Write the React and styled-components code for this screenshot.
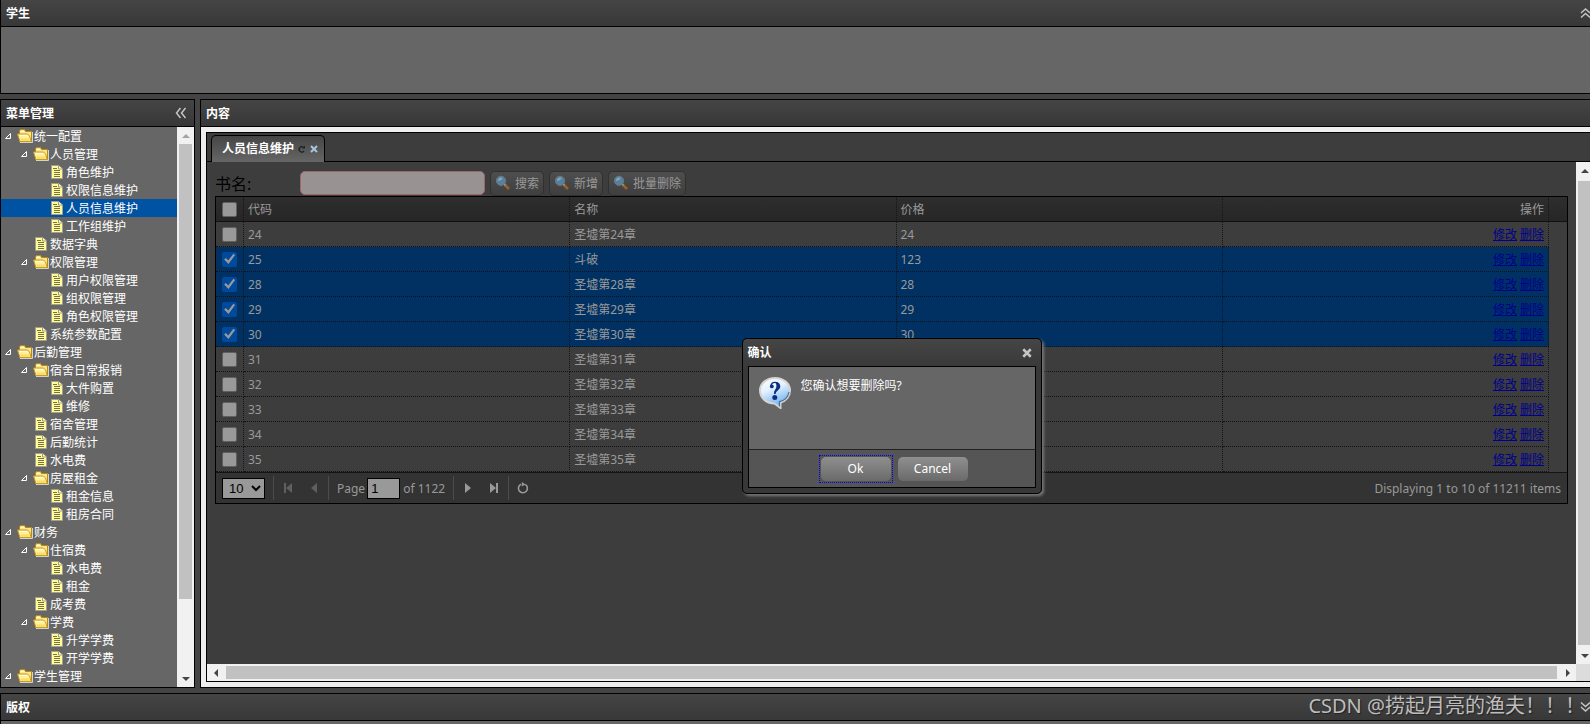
import React, { useState } from 'react'
import styled, { createGlobalStyle, css } from 'styled-components'

const GlobalStyle = createGlobalStyle`
  * {
    box-sizing: border-box;
  }
  html, body, #root {
    height: 100%;
    margin: 0;
  }
  body {
    overflow: hidden;
    background: #444;
    color: #fff;
    font-family: "Noto Sans", "Noto Sans CJK SC", sans-serif;
    font-size: 12px;
    line-height: 18px;
  }
  button, input, select {
    font: inherit;
    margin: 0;
  }
`

const TREE = [
  [0, 'folder', '统一配置'],
  [1, 'folder', '人员管理'],
  [2, 'file', '角色维护'],
  [2, 'file', '权限信息维护'],
  [2, 'file', '人员信息维护'],
  [2, 'file', '工作组维护'],
  [1, 'file', '数据字典'],
  [1, 'folder', '权限管理'],
  [2, 'file', '用户权限管理'],
  [2, 'file', '组权限管理'],
  [2, 'file', '角色权限管理'],
  [1, 'file', '系统参数配置'],
  [0, 'folder', '后勤管理'],
  [1, 'folder', '宿舍日常报销'],
  [2, 'file', '大件购置'],
  [2, 'file', '维修'],
  [1, 'file', '宿舍管理'],
  [1, 'file', '后勤统计'],
  [1, 'file', '水电费'],
  [1, 'folder', '房屋租金'],
  [2, 'file', '租金信息'],
  [2, 'file', '租房合同'],
  [0, 'folder', '财务'],
  [1, 'folder', '住宿费'],
  [2, 'file', '水电费'],
  [2, 'file', '租金'],
  [1, 'file', '成考费'],
  [1, 'folder', '学费'],
  [2, 'file', '升学学费'],
  [2, 'file', '开学学费'],
  [0, 'folder', '学生管理'],
]

const ROWS = [
  { id: 24, name: '圣墟第24章', price: 24 },
  { id: 25, name: '斗破', price: 123 },
  { id: 28, name: '圣墟第28章', price: 28 },
  { id: 29, name: '圣墟第29章', price: 29 },
  { id: 30, name: '圣墟第30章', price: 30 },
  { id: 31, name: '圣墟第31章', price: 31 },
  { id: 32, name: '圣墟第32章', price: 32 },
  { id: 33, name: '圣墟第33章', price: 33 },
  { id: 34, name: '圣墟第34章', price: 34 },
  { id: 35, name: '圣墟第35章', price: 35 },
]

/* ---------- layout ---------- */

// the layout is a little wider than the window, its right edge is cut off
const Layout = styled.div`
  display: flex;
  flex-direction: column;
  gap: 5px;
  width: calc(100% + 10px);
  height: 100%;
  background: #444;
`
const Middle = styled.div`
  display: flex;
  flex: 1;
  gap: 5px;
  min-height: 0;
`
const Panel = styled.section`
  display: flex;
  flex-direction: column;
  border: 1px solid #000;
  min-width: 0;
`
const North = styled(Panel)`
  height: 94px;
  border-top: 0;
`
const West = styled(Panel)`
  flex: 0 0 195px;
`
const Center = styled(Panel)`
  flex: 1;
`
const South = styled(Panel)`
  height: 31px;
  border-bottom: 0;
`
const PanelHeader = styled.header`
  display: flex;
  align-items: center;
  justify-content: space-between;
  flex: 0 0 27px;
  padding: 0 5px;
  border-bottom: 1px solid #000;
  background: linear-gradient(#454545, #383838);
`
const PanelTitle = styled.h2`
  margin: 0;
  padding-top: 2px;
  font-size: 12px;
  font-weight: 700;
`
const ToolButton = styled.button`
  display: grid;
  place-items: center;
  width: 16px;
  height: 16px;
  padding: 0;
  border: 0;
  background: none;
  color: #c4c4c4;
`
const PanelBody = styled.div`
  flex: 1;
  background: #666;
`

/* ---------- scroll bars ---------- */

const Bar = styled.div`
  display: flex;
  flex-direction: ${p => (p.$vertical ? 'column' : 'row')};
  gap: ${p => p.$gap}px;
  background: #f1f1f1;
  ${p => (p.$vertical ? 'width: 17px;' : 'height: 17px;')}
`
const BarArrow = styled.span`
  display: grid;
  place-items: center;
  flex: 0 0 17px;
  color: ${p => (p.$off ? '#a3a3a3' : '#444')};
`
const BarThumb = styled.span`
  flex: ${p => p.$share};
  margin: ${p => (p.$vertical ? '0 2px' : '2px 0')};
  background: #c1c1c1;
`
const BarRest = styled.span`
  flex: ${p => p.$share};
`

const TRIANGLES = {
  up: 'M0 6 L4 2 L8 6Z',
  down: 'M0 2 L4 6 L8 2Z',
  left: 'M6 0 L2 4 L6 8Z',
  right: 'M2 0 L6 4 L2 8Z',
}
const Triangle = ({ dir }) => (
  <svg width="8" height="8" viewBox="0 0 8 8"><path d={TRIANGLES[dir]} fill="currentColor" /></svg>
)

const ScrollBar = ({ vertical, gap = 0, thumb, atStart }) => (
  <Bar $vertical={vertical} $gap={gap} aria-hidden="true">
    <BarArrow $off={atStart}><Triangle dir={vertical ? 'up' : 'left'} /></BarArrow>
    <BarThumb $vertical={vertical} $share={thumb} />
    {thumb < 100 && <BarRest $share={100 - thumb} />}
    <BarArrow><Triangle dir={vertical ? 'down' : 'right'} /></BarArrow>
  </Bar>
)

/* ---------- icons ---------- */

const CHEVRONS = {
  up: 'M1 6 L5.5 2 L10 6 M1 10.5 L5.5 6.5 L10 10.5',
  down: 'M1 1.5 L5.5 5.5 L10 1.5 M1 6 L5.5 10 L10 6',
  left: 'M5.5 1 L1.5 6 L5.5 11 M10.5 1 L6.5 6 L10.5 11',
}
const DoubleChevron = ({ dir }) => (
  <svg width="12" height="12" viewBox="0 0 12 12">
    <path d={CHEVRONS[dir]} fill="none" stroke="currentColor" strokeWidth="1.5" />
  </svg>
)

const ExpandedIcon = () => (
  <svg width="16" height="18" viewBox="0 0 16 18">
    <path d="M4.5 11.5 L9.5 11.5 L9.5 6.5Z" fill="none" stroke="#fff" />
  </svg>
)

const FolderIcon = () => (
  <svg width="16" height="16" viewBox="0 0 16 16">
    <path d="M3 14.5 H15.5 V4" fill="none" stroke="#d8d4c4" />
    <path d="M2.5 13.5 V3 L3.5 1.5 H7.5 L8.5 3.5 H14.5 V13.5Z" fill="#fbe689" stroke="#b98a1a" />
    <path d="M3.5 3.5 H7.5" stroke="#fffbd0" />
    <path d="M0.5 6 H10.5 L12.5 8 L14.2 13.5 H3Z" fill="#fff099" stroke="#c79a2a" />
    <path d="M2 7.5 H10 L11.5 9" fill="none" stroke="#fffcd8" />
    <path d="M3.4 10.5 H12 L12.8 12.7 H4Z" fill="#f9dc62" />
  </svg>
)

const FileIcon = () => (
  <svg width="16" height="16" viewBox="0 0 16 16">
    <path d="M2.5 1.5 H9.5 L13.5 5 V14.5 H2.5Z" fill="#fffb9e" stroke="#a3a08a" />
    <path d="M9.5 1.5 V5 H13.5" fill="#fffde0" stroke="#a09d70" />
    <path d="M4 4.5 H8 M5 6.5 H11 M5 8.5 H11 M5 10.5 H11 M5 12.5 H11" stroke="#77753c" />
  </svg>
)

const SearchIcon = () => (
  <svg width="16" height="16" viewBox="0 0 16 16">
    <path d="M9.5 9.5 L14 14" stroke="#9a6420" strokeWidth="2.5" />
    <path d="M9 8.8 L10.5 10.3" stroke="#8f8f8f" strokeWidth="2" />
    <circle cx="6" cy="5.8" r="4.6" fill="#56809f" stroke="#6f7880" />
    <path d="M3 6 A3.2 3.2 0 0 1 7.5 2.8 Q7 5.5 3 6Z" fill="#86a6bd" />
  </svg>
)

const QuestionIcon = () => (
  <svg width="32" height="32" viewBox="0 0 32 32" aria-hidden="true">
    <defs>
      <linearGradient id="bubble" x1="0" y1="0" x2="0.4" y2="1">
        <stop offset="0" stopColor="#fff" />
        <stop offset="0.45" stopColor="#e3f1ff" />
        <stop offset="1" stopColor="#6fb1ee" />
      </linearGradient>
    </defs>
    <path
      d="M16 1 C24.5 1 31 6.5 31 13.5 C31 19.5 27 24 21.5 25.5 L21.5 31 L15.5 26.5 C7 26 1 21 1 13.5 C1 6.5 7.5 1 16 1Z"
      fill="url(#bubble)"
      stroke="#d4d4d4"
      strokeWidth="2"
    />
    <path d="M30 15 C29 20 26 23.5 20.5 24.7 L20.5 29.5" fill="none" stroke="#4c6f96" strokeWidth="1.2" />
    <path d="M12 9 C12.2 6.4 13.8 5.4 16 5.4 C18 5.4 19.2 6.8 19.2 9 C19.2 12.4 15.8 12.6 15.6 17" fill="none" stroke="#0b2f86" strokeWidth="1.4" />
    <path d="M16.5 5 C19.8 5 21.3 7 21.3 9.3 C21.3 12.8 17.2 13.6 16.4 17 H15.2 C15 13 17.4 12.4 17.4 9 C17.4 7.2 17 6 15.8 5.8Z" fill="#0b2f86" />
    <circle cx="12.8" cy="9.4" r="1.9" fill="#0b2f86" />
    <circle cx="15.8" cy="20.4" r="2.5" fill="#0b2f86" />
  </svg>
)

const ReloadIcon = ({ size }) => (
  <svg width={size} height={size} viewBox="0 0 12 12">
    <path d="M8.2 2.4 A4.5 4.5 0 1 1 4 2.2" fill="none" stroke="currentColor" strokeWidth="1.6" />
    <path d="M4.8 0 L8.6 2.4 L4.8 4.4Z" fill="currentColor" />
  </svg>
)

const TabReloadIcon = () => (
  <svg width="8" height="8" viewBox="0 0 8 8">
    <path d="M6 6 A2.7 2.7 0 1 1 5.3 2" fill="none" stroke="currentColor" strokeWidth="1.4" />
    <path d="M7 0.5 V3.5 H4Z" fill="currentColor" />
  </svg>
)

const CrossIcon = ({ size }) => (
  <svg width={size} height={size} viewBox="0 0 8 8">
    <path d="M1 1 L7 7 M7 1 L1 7" fill="none" stroke="currentColor" strokeWidth="2" />
  </svg>
)

const PAGE_ARROWS = {
  first: 'M2 1 H4 V11 H2Z M10 1 V11 L4 6Z',
  prev: 'M9 1 V11 L3 6Z',
  next: 'M3 1 V11 L9 6Z',
  last: 'M2 1 V11 L8 6Z M8 1 H10 V11 H8Z',
}
const PageArrow = ({ to }) => (
  <svg width="12" height="12" viewBox="0 0 12 12"><path d={PAGE_ARROWS[to]} fill="currentColor" /></svg>
)

/* ---------- tree ---------- */

const TreeBody = styled.div`
  display: flex;
  flex: 1;
  min-height: 0;
  background: #666;
`
const Tree = styled.ul`
  flex: 1;
  min-width: 0;
  margin: 0;
  padding: 0;
  overflow: hidden;
  list-style: none;
`
const TreeNode = styled.li`
  display: flex;
  align-items: center;
  height: 18px;
  padding-left: ${p => p.$depth * 16 + (p.$leaf ? 16 : 0)}px;
  white-space: nowrap;
  cursor: pointer;
  ${p => p.$selected && css`
    background: #0052a3;
  `}
`
const TreeTitle = styled.span`
  padding: 2px 1px 0;
`

/* ---------- tabs ---------- */

const CenterBody = styled.div`
  display: flex;
  flex: 1;
  min-height: 0;
  padding: 5px;
  background: #eee;
`
const Tabs = styled.div`
  display: flex;
  flex-direction: column;
  flex: 1;
  min-width: 0;
  border: 1px solid #000;
  background: #3d3d3d;
`
const TabStrip = styled.div`
  display: flex;
  align-items: flex-end;
  flex: 0 0 29px;
  padding-left: 4px;
  border-bottom: 1px solid #000;
`
const Tab = styled.div`
  display: flex;
  align-items: center;
  gap: 4px;
  height: 27px;
  margin-bottom: -1px;
  padding: 0 6px 0 10px;
  border: 1px solid #000;
  border-bottom: 0;
  border-radius: 5px 5px 0 0;
  background: linear-gradient(#454545, #666);
  font-weight: 700;
`
const TabTool = styled.button`
  display: grid;
  place-items: center;
  width: 8px;
  height: 8px;
  padding: 0;
  border: 0;
  background: none;
  color: ${p => p.$color};
`
const Frame = styled.div`
  display: grid;
  grid-template: minmax(0, 1fr) 17px / minmax(0, 1fr) 17px;
  flex: 1;
  min-height: 0;
`
const Page = styled.div`
  position: relative;
  padding: 8px;
  color: #999;
`
const Corner = styled.span`
  background: #dcdcdc;
`

/* ---------- search bar ---------- */

const SearchForm = styled.form`
  display: flex;
  align-items: center;
  gap: 5px;
  height: 26px;
`
const SearchLabel = styled.label`
  width: 80px;
  padding-top: 2px;
  color: #000;
  font-size: 16px;
`
const SearchInput = styled.input`
  width: 185px;
  height: 24px;
  padding: 0 4px;
  border: 1px solid #a06666;
  border-radius: 5px;
  background: #999292;
`
const LinkButton = styled.button`
  display: flex;
  align-items: center;
  gap: 4px;
  height: 25px;
  padding: 0 4px;
  border: 1px solid #303030;
  border-radius: 5px;
  background: linear-gradient(#4e4e4e, #3f3f3f);
  color: #999;
`
const LinkButtonText = styled.span`
  padding-top: 2px;
`

/* ---------- data grid ---------- */

const Grid = styled.div`
  border: 1px solid #000;
`
const GridTable = styled.table`
  width: 100%;
  border-spacing: 0;
  table-layout: fixed;
`
const CheckCol = styled.col`
  width: 28px;
`
const GutterCol = styled.col`
  width: 18px;
`
const HeadRow = styled.tr`
  height: 25px;
  background: linear-gradient(#2e2e2e, #262626);
`
const cell = css`
  height: 25px;
  padding: ${p => (p.$check ? '0 4px' : '2px 4px 0')};
  border-right: 1px dotted #141414;
  font-weight: 400;
  text-align: ${p => p.$align || 'left'};
  white-space: nowrap;
`
const HeadCell = styled.th`
  ${cell}
  border-bottom: 1px solid #111;
`
const HeadGutter = styled.td`
  border-bottom: 1px solid #111;
`
const BodyCell = styled.td`
  ${cell}
  border-bottom: 1px dotted #111;
  background: ${p => (p.$selected ? '#003162' : 'transparent')};
`
const Check = styled.input.attrs({ type: 'checkbox' })`
  appearance: none;
  display: block;
  width: 15px;
  height: 15px;
  margin: 0 auto;
  border: 1px solid #606060;
  border-radius: 2px;
  background: #999;

  &:checked {
    border-color: #004a9e;
    background: #004a9e;
  }
  &:checked::before {
    content: '';
    display: block;
    width: 13px;
    height: 13px;
    background: #999;
    clip-path: polygon(9% 53%, 22% 42%, 40% 62%, 80% 10%, 93% 20%, 42% 88%);
  }
`
const RowLink = styled.a`
  margin-left: 3px;
  color: #00008f;
`

const Pager = styled.div`
  display: flex;
  align-items: center;
  height: 31px;
  padding: 0 6px;
  border-top: 1px solid #141414;
  background: #333;
`
const PageSize = styled.select`
  width: 43px;
  height: 21px;
  padding: 0 0 0 2px;
  border: 1px solid #000;
  border-radius: 0;
  background: #999;
  color: #000;
  font-family: "Liberation Sans", sans-serif;
  font-size: 13px;
`
const PagerLine = styled.span`
  width: 1px;
  height: 24px;
  margin: 0 2px;
  background: #4c4c4c;

  ${PageSize} + & {
    margin-left: 8px;
  }
`
const PagerButton = styled.button`
  display: grid;
  place-items: center;
  width: 24px;
  height: 24px;
  padding: 0;
  border: 0;
  background: none;
  color: ${p => (p.disabled ? '#5f5f5f' : '#999')};

  & + & {
    margin-left: 2px;
  }
`
const PageLabel = styled.label`
  padding: 2px 0 0 6px;
`
const PageTotal = styled.span`
  padding: 2px 6px 0 0;
`
const PageInput = styled.input`
  width: 33px;
  height: 21px;
  margin: 0 3px 0 2px;
  padding: 0 3px;
  border: 1px solid #000;
  background: #999;
  color: #000;
  font-family: "Liberation Sans", sans-serif;
  font-size: 13px;
`
const PagerInfo = styled.span`
  margin-left: auto;
  padding-top: 2px;
`

/* ---------- confirm window ---------- */

const Confirm = styled.div`
  position: absolute;
  top: calc(50% - 75px);
  left: calc(50% - 150px);
  width: 300px;
  padding: 0 5px 5px;
  border: 1px solid #000;
  border-radius: 5px;
  background: linear-gradient(#454545, #383838 20%);
  box-shadow: 2px 2px 3px #787878;
  color: #fff;
`
const ConfirmHeader = styled.header`
  display: flex;
  align-items: center;
  justify-content: space-between;
  height: 27px;
  padding-right: 1px;
`
const ConfirmTitle = styled(PanelTitle)`
  padding-top: 0;
`
const ConfirmBox = styled.div`
  border: 1px solid #000;
`
const Message = styled.div`
  display: flex;
  align-items: flex-start;
  gap: 10px;
  height: 82px;
  padding: 10px;
  background: #666;
`
const MessageText = styled.p`
  margin: 0;
`
const Buttons = styled.div`
  display: flex;
  align-items: center;
  justify-content: center;
  gap: 5px;
  height: 38px;
  padding-left: 5px;
  border-top: 1px solid #222;
  background: #555;
`
const ConfirmButton = styled.button`
  width: 72px;
  height: 26px;
  padding: 1px;
  border: 0;
  background: none;
  color: #fff;
  ${p => p.$active && css`
    outline: 1px dotted #00f;
  `}
`
const ConfirmFace = styled.span`
  display: block;
  border-radius: 5px;
  background: linear-gradient(#8f8f8f, #6a6a6a);
  line-height: 24px;
`

const Watermark = styled.span`
  position: absolute;
  right: 5px;
  bottom: 6px;
  color: #bdbdbd;
  font-size: 20px;
  line-height: 24px;
  text-shadow: 1px 1px 1px #222;
  pointer-events: none;
`

const SideMenu = () => {
  const [current, setCurrent] = useState(4)
  return (
    <TreeBody>
      <Tree>
        {TREE.map(([depth, kind, text], i) => (
          <TreeNode
            key={i}
            $depth={depth}
            $leaf={kind === 'file'}
            $selected={i === current}
            onClick={() => setCurrent(i)}
          >
            {kind === 'folder' && <ExpandedIcon />}
            {kind === 'folder' ? <FolderIcon /> : <FileIcon />}
            <TreeTitle>{text}</TreeTitle>
          </TreeNode>
        ))}
      </Tree>
      <ScrollBar vertical thumb={86.5} atStart />
    </TreeBody>
  )
}

const DataGrid = () => {
  const [checked, setChecked] = useState([25, 28, 29, 30])
  const toggle = id =>
    setChecked(checked.includes(id) ? checked.filter(c => c !== id) : [...checked, id])
  const all = checked.length === ROWS.length

  return (
    <Grid>
      <GridTable>
        <colgroup>
          <CheckCol />
          <col />
          <col />
          <col />
          <col />
          <GutterCol />
        </colgroup>
        <thead>
          <HeadRow>
            <HeadCell $check>
              <Check
                aria-label="全选"
                checked={all}
                onChange={() => setChecked(all ? [] : ROWS.map(r => r.id))}
              />
            </HeadCell>
            <HeadCell>代码</HeadCell>
            <HeadCell>名称</HeadCell>
            <HeadCell>价格</HeadCell>
            <HeadCell $align="right">操作</HeadCell>
            <HeadGutter />
          </HeadRow>
        </thead>
        <tbody>
          {ROWS.map(row => {
            const on = checked.includes(row.id)
            return (
              <tr key={row.id}>
                <BodyCell $check $selected={on}>
                  <Check aria-label={row.name} checked={on} onChange={() => toggle(row.id)} />
                </BodyCell>
                <BodyCell $selected={on}>{row.id}</BodyCell>
                <BodyCell $selected={on}>{row.name}</BodyCell>
                <BodyCell $selected={on}>{row.price}</BodyCell>
                <BodyCell $selected={on} $align="right">
                  <RowLink href="#edit">修改</RowLink>
                  <RowLink href="#delete">删除</RowLink>
                </BodyCell>
                <td />
              </tr>
            )
          })}
        </tbody>
      </GridTable>
      <Pager>
        <PageSize aria-label="每页条数" defaultValue="10">
          <option>10</option>
          <option>20</option>
          <option>50</option>
        </PageSize>
        <PagerLine />
        <PagerButton disabled aria-label="首页"><PageArrow to="first" /></PagerButton>
        <PagerButton disabled aria-label="上一页"><PageArrow to="prev" /></PagerButton>
        <PagerLine />
        <PageLabel htmlFor="page">Page</PageLabel>
        <PageInput id="page" defaultValue="1" />
        <PageTotal>of 1122</PageTotal>
        <PagerLine />
        <PagerButton aria-label="下一页"><PageArrow to="next" /></PagerButton>
        <PagerButton aria-label="末页"><PageArrow to="last" /></PagerButton>
        <PagerLine />
        <PagerButton aria-label="刷新"><ReloadIcon size={12} /></PagerButton>
        <PagerInfo>Displaying 1 to 10 of 11211 items</PagerInfo>
      </Pager>
    </Grid>
  )
}

const ConfirmWindow = ({ onClose }) => (
  <Confirm role="dialog" aria-labelledby="confirm-title">
    <ConfirmHeader>
      <ConfirmTitle id="confirm-title">确认</ConfirmTitle>
      <ToolButton aria-label="关闭" onClick={onClose}><CrossIcon size={10} /></ToolButton>
    </ConfirmHeader>
    <ConfirmBox>
      <Message>
        <QuestionIcon />
        <MessageText>您确认想要删除吗?</MessageText>
      </Message>
      <Buttons>
        <ConfirmButton $active onClick={onClose}><ConfirmFace>Ok</ConfirmFace></ConfirmButton>
        <ConfirmButton onClick={onClose}><ConfirmFace>Cancel</ConfirmFace></ConfirmButton>
      </Buttons>
    </ConfirmBox>
  </Confirm>
)

export default function App() {
  const [confirming, setConfirming] = useState(true)
  return (
    <>
      <GlobalStyle />
      <Layout>
        <North>
          <PanelHeader>
            <PanelTitle>学生</PanelTitle>
            <ToolButton aria-label="收起"><DoubleChevron dir="up" /></ToolButton>
          </PanelHeader>
          <PanelBody />
        </North>
        <Middle>
          <West as="nav">
            <PanelHeader>
              <PanelTitle>菜单管理</PanelTitle>
              <ToolButton aria-label="收起菜单"><DoubleChevron dir="left" /></ToolButton>
            </PanelHeader>
            <SideMenu />
          </West>
          <Center as="main">
            <PanelHeader>
              <PanelTitle>内容</PanelTitle>
            </PanelHeader>
            <CenterBody>
              <Tabs>
                <TabStrip>
                  <Tab>
                    <span>人员信息维护</span>
                    <TabTool $color="#222" aria-label="刷新标签"><TabReloadIcon /></TabTool>
                    <TabTool $color="#a9c4e0" aria-label="关闭标签"><CrossIcon size={8} /></TabTool>
                  </Tab>
                </TabStrip>
                <Frame>
                  <Page>
                    <SearchForm onSubmit={e => e.preventDefault()}>
                      <SearchLabel htmlFor="book">书名:</SearchLabel>
                      <SearchInput id="book" />
                      <LinkButton type="submit">
                        <SearchIcon />
                        <LinkButtonText>搜索</LinkButtonText>
                      </LinkButton>
                      <LinkButton type="button">
                        <SearchIcon />
                        <LinkButtonText>新增</LinkButtonText>
                      </LinkButton>
                      <LinkButton type="button" onClick={() => setConfirming(true)}>
                        <SearchIcon />
                        <LinkButtonText>批量删除</LinkButtonText>
                      </LinkButton>
                    </SearchForm>
                    <DataGrid />
                    {confirming && <ConfirmWindow onClose={() => setConfirming(false)} />}
                  </Page>
                  <ScrollBar vertical gap={2} thumb={100} />
                  <ScrollBar gap={2} thumb={100} />
                  <Corner />
                </Frame>
              </Tabs>
            </CenterBody>
          </Center>
        </Middle>
        <South as="footer">
          <PanelHeader>
            <PanelTitle>版权</PanelTitle>
            <ToolButton aria-label="展开"><DoubleChevron dir="down" /></ToolButton>
          </PanelHeader>
          <PanelBody />
        </South>
      </Layout>
      <Watermark>CSDN @捞起月亮的渔夫！！！</Watermark>
    </>
  )
}
